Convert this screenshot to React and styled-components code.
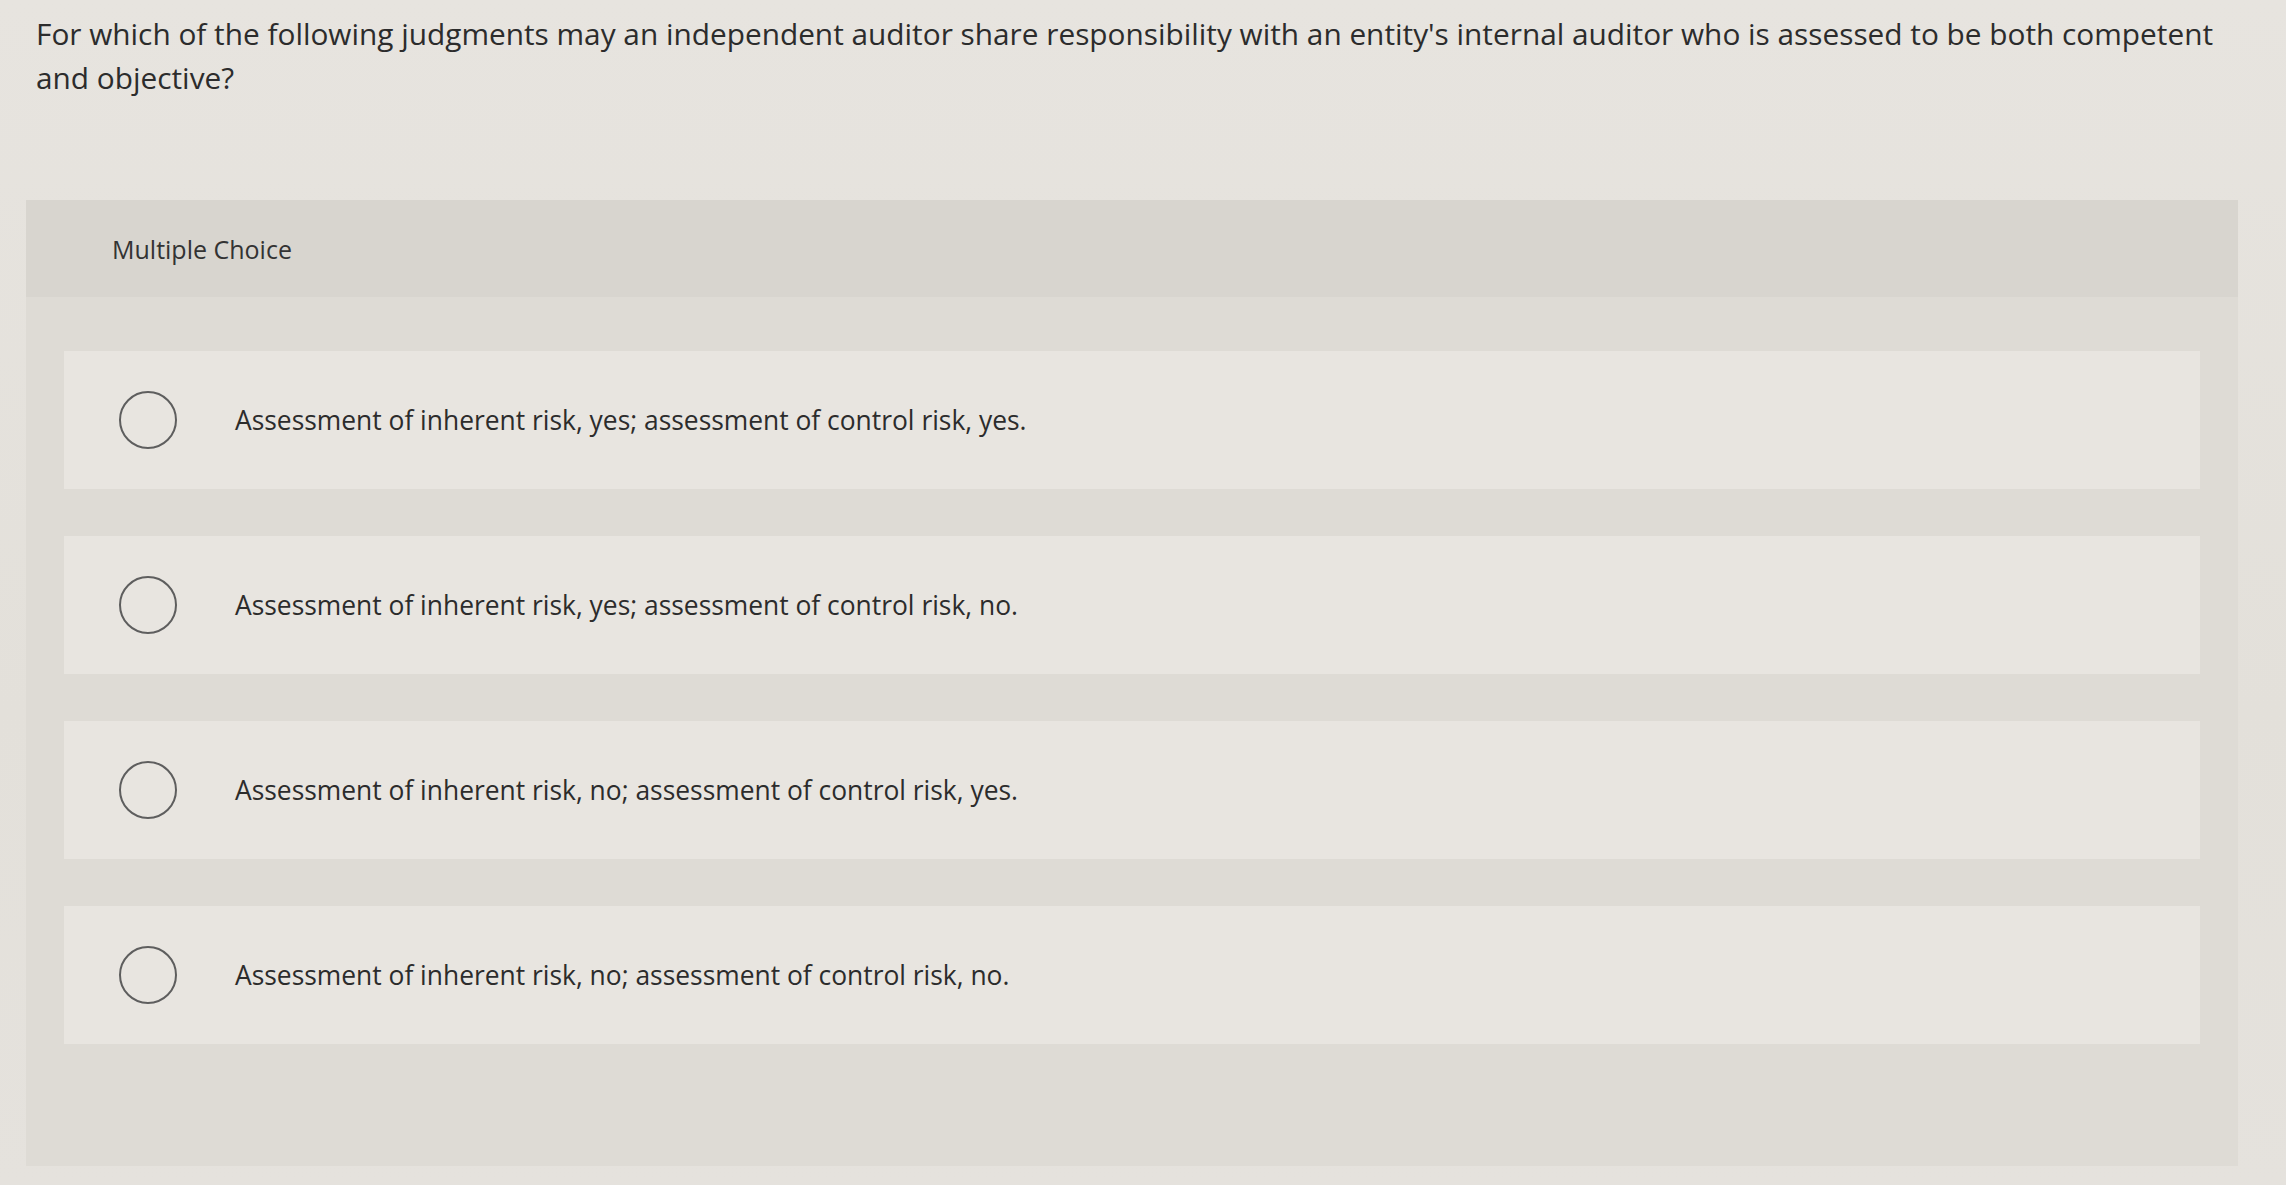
import React from "react";
import styled, { createGlobalStyle } from "styled-components";

const Global = createGlobalStyle`
  html, body { margin: 0; padding: 0; }
  body {
    background: #e4e1dc;
    font-family: "Open Sans", "Liberation Sans", sans-serif;
    color: #2f2f2f;
  }
`;

const Page = styled.div`
  width: 2286px;
  height: 1185px;
  overflow: hidden;
  background: linear-gradient(180deg, #e7e4df 0%, #e3e0da 60%, #e5e2dd 100%);
`;

const Question = styled.p`
  margin: 0;
  padding: 12px 0 0 36px;
  width: 2190px;
  font-size: 29.8px;
  line-height: 44px;
  color: #2c2c2c;
`;

const Card = styled.section`
  margin: 100px 48px 0 26px;
  background: #dedbd5;
  padding-bottom: 122px;
`;

const CardHeader = styled.div`
  height: 97px;
  display: flex;
  align-items: center;
  padding-left: 86px;
  background: #d8d5cf;
  font-size: 25px;
  color: #333;
`;

const Options = styled.div`
  display: flex;
  flex-direction: column;
  gap: 47px;
  padding: 54px 38px 0 38px;
`;

const Option = styled.label`
  height: 138px;
  display: flex;
  align-items: center;
  background: #e8e5e0;
  padding-left: 55px;
  cursor: pointer;
`;

const Radio = styled.span`
  width: 58px;
  height: 58px;
  box-sizing: border-box;
  border: 2px solid #5e5e5e;
  border-radius: 50%;
  flex: none;
`;

const OptionText = styled.span`
  margin-left: 58px;
  font-size: 26.4px;
  color: #2c2c2c;
`;

const options = [
  "Assessment of inherent risk, yes; assessment of control risk, yes.",
  "Assessment of inherent risk, yes; assessment of control risk, no.",
  "Assessment of inherent risk, no; assessment of control risk, yes.",
  "Assessment of inherent risk, no; assessment of control risk, no.",
];

export default function App() {
  return (
    <Page>
      <Global />
      <Question>
        For which of the following judgments may an independent auditor share
        responsibility with an entity's internal auditor who is assessed to be
        both competent and objective?
      </Question>
      <Card>
        <CardHeader>Multiple Choice</CardHeader>
        <Options>
          {options.map((o) => (
            <Option key={o}>
              <Radio />
              <OptionText>{o}</OptionText>
            </Option>
          ))}
        </Options>
      </Card>
    </Page>
  );
}
